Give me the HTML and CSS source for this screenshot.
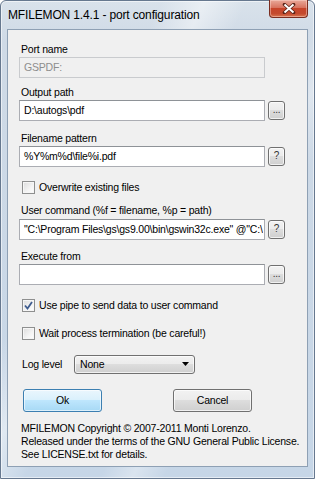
FILE: index.html
```html
<!DOCTYPE html>
<html>
<head>
<meta charset="utf-8">
<link rel="stylesheet" href="styles.css">
</head>
<body>
<div class="frame">
  <div class="titlebar">
    <span class="title">MFILEMON 1.4.1 - port configuration</span>
    <div class="close">
      <svg width="14" height="11" viewBox="0 0 14 11"><path d="M2.5 1.5 L11.5 9.5 M11.5 1.5 L2.5 9.5" stroke="#5a2418" stroke-width="3.6" stroke-linecap="round"/><path d="M2.5 1.5 L11.5 9.5 M11.5 1.5 L2.5 9.5" stroke="#ffffff" stroke-width="2"/></svg>
    </div>
  </div>
  <div class="client">
    <div class="label l1">Port name</div>
    <div class="row f1"><div class="input disabled">GSPDF:</div></div>

    <div class="label l2">Output path</div>
    <div class="row f2"><div class="input">D:\autogs\pdf</div><div class="btn small">...</div></div>

    <div class="label l3">Filename pattern</div>
    <div class="row f3"><div class="input">%Y%m%d\file%i.pdf</div><div class="btn small">?</div></div>

    <div class="check c1"><span class="box"></span><span>Overwrite existing files</span></div>

    <div class="label l4">User command (%f = filename, %p = path)</div>
    <div class="row f4"><div class="input"><span class="clip">"C:\Program Files\gs\gs9.00\bin\gswin32c.exe" @"C:\</span></div><div class="btn small">?</div></div>

    <div class="label l5">Execute from</div>
    <div class="row f5"><div class="input"></div><div class="btn small">...</div></div>

    <div class="check c2"><span class="box checked"><svg width="9" height="9" viewBox="0 0 9 9"><path d="M1 4.5 L3.5 7.5 L8 1" fill="none" stroke="#3f5c8e" stroke-width="1.8"/></svg></span><span>Use pipe to send data to user command</span></div>

    <div class="check c3"><span class="box"></span><span>Wait process termination (be careful!)</span></div>

    <div class="logrow">
      <span class="loglabel">Log level</span>
      <div class="select"><span>None</span><svg width="7" height="4" viewBox="0 0 7 4"><path d="M0 0 H7 L3.5 4 Z" fill="#000"/></svg></div>
    </div>

    <div class="buttons">
      <div class="btn push default">Ok</div>
      <div class="btn push">Cancel</div>
    </div>

    <div class="copy">MFILEMON Copyright © 2007-2011 Monti Lorenzo.<br>Released under the terms of the GNU General Public License.<br>See LICENSE.txt for details.</div>
  </div>
</div>
</body>
</html>
```

FILE: styles.css
```css
html, body {
  margin: 0;
  padding: 0;
}
body {
  width: 315px;
  height: 479px;
  overflow: hidden;
  background: #ffffff;
}
.frame {
  box-sizing: border-box;
  width: 315px;
  height: 479px;
  border: 1px solid #66788f;
  border-radius: 6px 6px 0 0;
  padding: 0 7px 11px 6px;
  display: flex;
  flex-direction: column;
  background:
    linear-gradient(115deg, rgba(255,255,255,0) 30%, rgba(255,255,255,0.45) 38%, rgba(255,255,255,0) 46%, rgba(255,255,255,0) 60%, rgba(255,255,255,0.35) 66%, rgba(255,255,255,0) 72%),
    linear-gradient(to bottom, #d9e2eb 0, #cfdae6 40px, #c6d6e7 100%);
  box-shadow: inset 0 0 0 1px rgba(255,255,255,0.55);
}
.titlebar {
  height: 28px;
  display: flex;
  justify-content: space-between;
  align-items: flex-start;
}
.title {
  font-family: "Liberation Sans", Arial, sans-serif;
  font-size: 12px;
  line-height: 16px;
  color: #000;
  margin: 6px 0 0 1px;
  letter-spacing: -0.15px;
}
.close {
  box-sizing: border-box;
  width: 39px;
  height: 18px;
  margin: -1px -1px 0 0;
  border: 1px solid #7a2d20;
  border-top: none;
  border-radius: 0 0 4px 4px;
  background: linear-gradient(to bottom, #e9a99a 0, #d8735f 45%, #c7442a 50%, #c44a2e 80%, #d9754f 100%);
  box-shadow: inset 0 0 0 1px rgba(255,220,210,0.45);
  display: flex;
  align-items: center;
  justify-content: center;
}
.client {
  box-sizing: border-box;
  width: 301px;
  height: 439px;
  border: 1px solid #8ea0b4;
  background: #f0f0f0;
  padding: 0 0 0 11px;
  font-family: "Liberation Sans", Arial, sans-serif;
  font-size: 10.5px;
  letter-spacing: -0.2px;
  color: #000;
  display: flex;
  flex-direction: column;
}
.label {
  line-height: 13px;
  height: 13px;
  padding-left: 2px;
  white-space: nowrap;
}
.l1 { margin-top: 13px; }
.l2 { margin-top: 8px; }
.l3 { margin-top: 11px; }
.l4 { margin-top: 10px; }
.l5 { margin-top: 10px; }
.row {
  display: flex;
  align-items: flex-start;
  gap: 3px;
  height: 21px;
}
.f1 { margin-top: 1px; }
.f2 { margin-top: 1px; }
.f3 { margin-top: 1px; }
.f4 { margin-top: 2px; }
.f5 { margin-top: 1px; }
.input {
  box-sizing: border-box;
  width: 246px;
  height: 21px;
  border: 1px solid #abadb3;
  border-top-color: #8e9297;
  background: #ffffff;
  padding: 0 1px 0 4px;
  line-height: 19px;
  white-space: nowrap;
  overflow: hidden;
}
.clip {
  display: block;
  overflow: hidden;
  width: 239px;
}
.input.disabled {
  background: #f0f0f0;
  border-color: #c9cbce;
  color: #8d8d8d;
}
.btn {
  box-sizing: border-box;
  border: 1px solid #707070;
  border-radius: 3px;
  background: linear-gradient(to bottom, #f2f2f2 0, #ebebeb 49%, #dddddd 50%, #cfcfcf 100%);
  box-shadow: inset 0 0 0 1px rgba(255,255,255,0.7);
  display: flex;
  align-items: center;
  justify-content: center;
  color: #000;
}
.btn.small {
  width: 17px;
  height: 19px;
  margin-top: 1px;
  font-size: 10px;
  line-height: 10px;
  color: #333;
}
.check {
  display: flex;
  align-items: center;
  height: 13px;
  padding-left: 3px;
  white-space: nowrap;
}
.c1 { margin-top: 14px; }
.c2 { margin-top: 14px; }
.c3 { margin-top: 15px; }
.box {
  box-sizing: border-box;
  width: 13px;
  height: 13px;
  border: 1px solid #8e8f8f;
  background: linear-gradient(135deg, #dcdcdc 0, #f4f4f4 60%, #ffffff 100%);
  box-shadow: inset 0 0 0 1px #f6f6f6;
  margin-right: 4px;
  display: flex;
  align-items: center;
  justify-content: center;
  flex: none;
}
.logrow {
  display: flex;
  align-items: center;
  margin-top: 15px;
  height: 19px;
}
.loglabel {
  width: 55px;
  padding-left: 3px;
  box-sizing: border-box;
}
.select {
  box-sizing: border-box;
  width: 121px;
  height: 19px;
  border: 1px solid #707070;
  border-radius: 3px;
  background: linear-gradient(to bottom, #f2f2f2 0, #ebebeb 49%, #dddddd 50%, #cfcfcf 100%);
  box-shadow: inset 0 0 0 1px rgba(255,255,255,0.7);
  display: flex;
  align-items: center;
  justify-content: space-between;
  padding: 0 5px 0 5px;
}
.buttons {
  display: flex;
  gap: 71px;
  margin-top: 15px;
  padding-left: 4px;
}
.btn.push {
  width: 79px;
  height: 23px;
}
.btn.default {
  border-color: #3c7fb1;
  background: linear-gradient(to bottom, #eaf6fd 0, #d9f0fc 49%, #bee6fd 50%, #a7d9f5 100%);
  box-shadow: inset 0 0 0 1px rgba(255,255,255,0.6);
}
.copy {
  margin-top: 10px;
  line-height: 13px;
  padding-left: 2px;
  white-space: nowrap;
}
```
